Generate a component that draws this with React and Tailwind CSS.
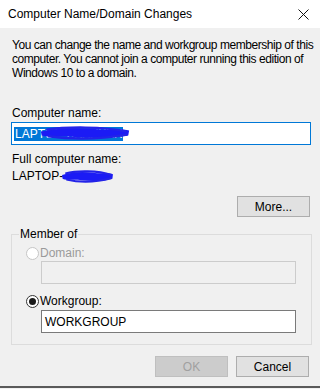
import React from 'react';

// Redaction scribble drawn over the machine name
const Scribble = ({ width, height, className = '' }) => (
  <svg width={width} height={height} viewBox="0 0 100 20" preserveAspectRatio="none" className={className}>
    <path d="M2 8 C20 4, 40 3, 60 5 S90 4, 98 7 L97 13 C80 16, 60 17, 40 15 S10 16, 3 13 Z" fill="#1b1bf5" />
    <path d="M8 6 C30 2, 70 2, 95 8 M10 14 C40 19, 70 17, 96 12" stroke="#2323e8" strokeWidth="3" fill="none" />
  </svg>
);

const Radio = ({ checked, disabled }) => (
  <span
    className={`w-[13px] h-[13px] rounded-full border flex items-center justify-center bg-white ${
      disabled ? 'border-[#c6c6c6] bg-[#f4f4f4]' : 'border-[#333]'
    }`}
  >
    {checked && <span className="w-[7px] h-[7px] rounded-full bg-[#1a1a1a]" />}
  </span>
);

const Button = ({ children, disabled }) => (
  <button
    className={`w-[73px] h-[21px] border text-[12px] leading-none ${
      disabled
        ? 'bg-[#cccccc] border-[#bfbfbf] text-[#a0a0a0]'
        : 'bg-[#e1e1e1] border-[#adadad] text-black'
    }`}
  >
    {children}
  </button>
);

export default function App() {
  return (
    <div
      className="w-[320px] h-[389px] flex flex-col bg-[#f0f0f0] text-[12px] leading-[14px] text-black overflow-hidden"
      style={{ fontFamily: '"Segoe UI", "Liberation Sans", Arial, sans-serif' }}
    >
      {/* Title bar */}
      <div className="h-[28px] bg-white flex items-center justify-between pl-[8px] pr-[8px] shrink-0">
        <span className="text-[12px]">Computer Name/Domain Changes</span>
        <svg width="11" height="11" viewBox="0 0 11 11" className="mr-[3px]">
          <path d="M0.5 0.5 L10.5 10.5 M10.5 0.5 L0.5 10.5" stroke="#111" strokeWidth="1" />
        </svg>
      </div>

      <div className="flex flex-col px-[12px] pt-[10px] flex-1">
        <div className="whitespace-nowrap tracking-[-0.45px]">
          <div>You can change the name and workgroup membership of this</div>
          <div>computer. You cannot join a computer running this edition of</div>
          <div>Windows 10 to a domain.</div>
        </div>

        <div className="mt-[26px]">Computer name:</div>
        <div className="relative mt-[2px] h-[23px] w-[300px] -ml-[1px] bg-white border border-[#0078d7] flex items-center pl-[2px]">
          <span className="bg-[#0078d7] text-white px-[1px]">LAPTOP-XXXXXXX</span>
          <Scribble width={92} height={16} className="absolute left-[27px] top-[2px]" />
        </div>

        <div className="mt-[7px]">Full computer name:</div>
        <div className="relative mt-[3px] h-[14px]">
          <span>LAPTOP-</span>
          <Scribble width={53} height={15} className="absolute left-[49px] top-[0px]" />
        </div>

        <div className="flex justify-end mt-[13px]">
          <div className="-mr-[2px]">
            <Button>More...</Button>
          </div>
        </div>

        <fieldset className="mt-[10px] -ml-[1px] w-[300px] h-[118px] border border-[#dcdcdc] px-[15px] pb-[12px]">
          <legend className="-ml-[8px] px-[1px]">Member of</legend>
          <div className="flex items-center gap-[1px] mt-[5px] -ml-[1px] text-[#9a9a9a]">
            <Radio disabled />
            <span>Domain:</span>
          </div>
          <div className="ml-[14px] mt-[1px] h-[23px] w-[255px] border border-[#cccccc] bg-[#f0f0f0]" />
          <div className="flex items-center gap-[1px] mt-[10px] -ml-[1px]">
            <Radio checked />
            <span>Workgroup:</span>
          </div>
          <div className="ml-[14px] mt-[2px] h-[23px] w-[255px] border border-[#7a7a7a] bg-white flex items-center pl-[3px]">
            WORKGROUP
          </div>
        </fieldset>

        <div className="flex justify-end gap-[8px] mt-[11px] -mr-[1px]">
          <Button disabled>OK</Button>
          <Button>Cancel</Button>
        </div>
      </div>

      <div className="h-[2px] bg-[#5a5a5a] shrink-0 mb-[1px]" />
    </div>
  );
}
